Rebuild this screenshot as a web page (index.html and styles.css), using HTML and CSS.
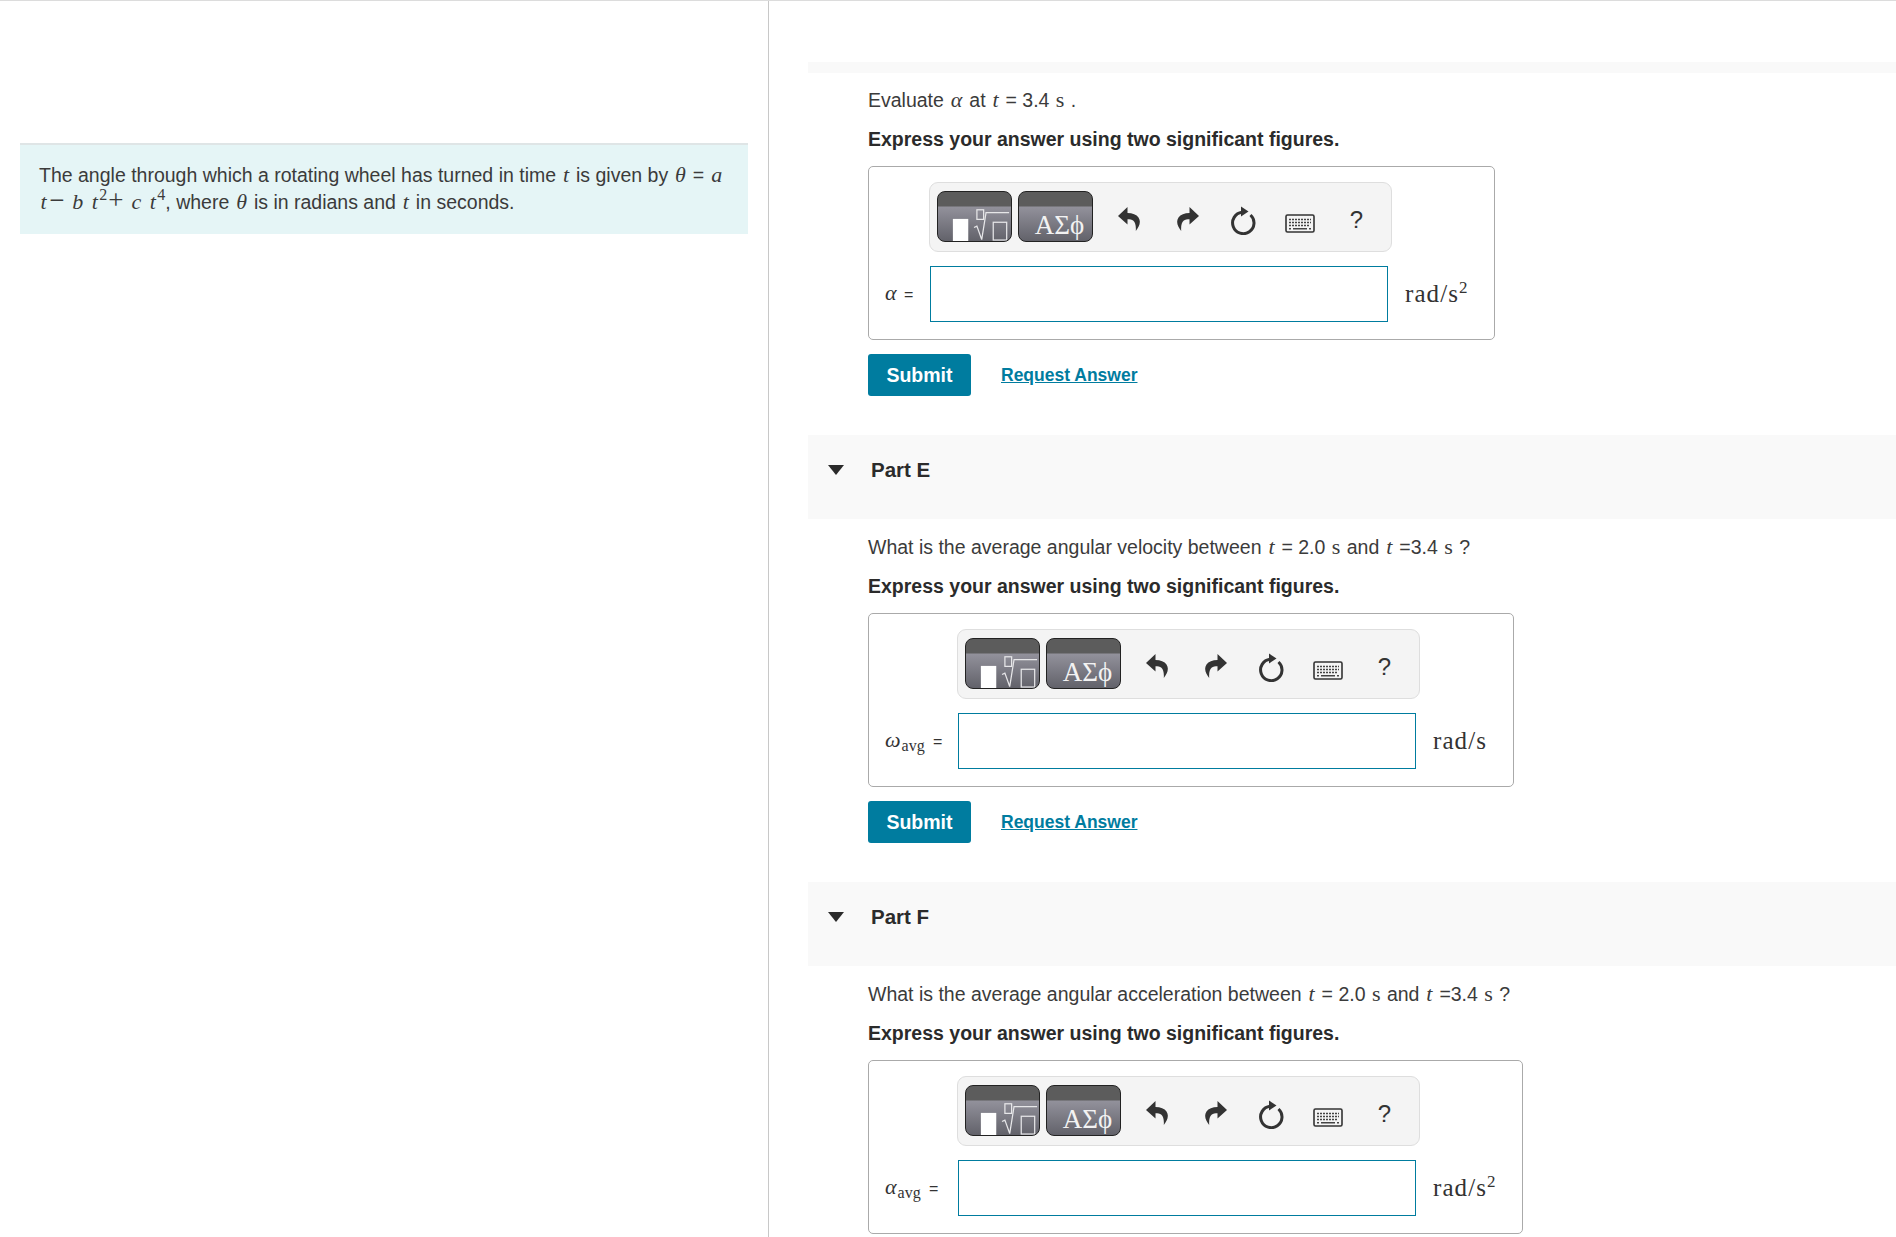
FILE: index.html
```html
<!DOCTYPE html>
<html lang="en">
<head>
<meta charset="utf-8">
<title>Rotating wheel</title>
<link rel="stylesheet" href="styles.css">
</head>
<body>
<svg class="defs" width="0" height="0" aria-hidden="true">
  <symbol id="i-tmpl" viewBox="0 0 75 51">
    <rect x="15" y="28" width="16" height="23" fill="#fff"/>
    <g fill="none" stroke="#e6e6e8" stroke-width="1.3">
      <rect x="40" y="18.5" width="7" height="10"/>
      <path d="M37 37l3-1.500 5 14 4.500-28h24"/>
      <rect x="57" y="31.500" width="14" height="18.500"/>
    </g>
  </symbol>
  <symbol id="i-undo" viewBox="0 0 22 24">
    <path d="M9.500 0L0 9l9.500 8.500v-5.300c5 0 9 1.300 8.300 11.800C21 20 23.500 15 20.500 10.500 18.500 7.500 14.500 6 9.500 6z" fill="#333"/>
  </symbol>
  <symbol id="i-redo" viewBox="0 0 22 24">
    <path d="M12.500 0L22 9l-9.500 8.500v-5.300c-5 0-9 1.300-8.300 11.800C1 20-1.500 15 1.500 10.500 3.500 7.500 7.500 6 12.500 6z" fill="#333"/>
  </symbol>
  <symbol id="i-reset" viewBox="0 0 26 29">
    <path d="M12 6.300A10.700 10.700 0 1 0 20.500 9" fill="none" stroke="#333" stroke-width="3"/>
    <path d="M11 0.500v10l7.500-5z" fill="#333"/>
  </symbol>
  <symbol id="i-kbd" viewBox="0 0 30 19">
    <rect x="1" y="1" width="28" height="17" rx="1.500" fill="#f4f4f4" stroke="#333" stroke-width="1.600"/>
    <path d="M4 5.500h22M4 8.500h22M4 11.500h20" stroke="#444" stroke-width="1.600" stroke-dasharray="2 1" fill="none"/>
    <path d="M8 14.800h14M4 14.800h2M24 14.800h2" stroke="#444" stroke-width="1.600" fill="none"/>
  </symbol>
</svg>

<div class="page">
  <aside class="left">
    <div class="problem">
      The angle through which a rotating wheel has turned in time <i class="m">t</i> is given by <i class="m">θ</i> = <i class="m">a</i><br>
      <i class="m">t</i><span class="op">−</span> <i class="m">b</i> <i class="m">t</i><sup class="m">2</sup><span class="op">+</span> <i class="m">c</i> <i class="m">t</i><sup class="m">4</sup>, where <i class="m">θ</i> is in radians and <i class="m">t</i> in seconds.
    </div>
  </aside>

  <main class="right">
    <section class="part">
      <div class="part-stub"></div>
      <div class="part-body">
        <p class="q">Evaluate <i class="m">α</i> at <i class="m">t</i> = 3.4 <span class="r">s</span> .</p>
        <p class="x">Express your answer using two significant figures.</p>
        <div class="answer narrow">
          <div class="toolbar">
            <button class="tb-btn" type="button"><svg class="tmpl"><use href="#i-tmpl"/></svg></button>
            <button class="tb-btn sym" type="button">ΑΣϕ</button>
            <span class="slot"><svg class="ic-arrow"><use href="#i-undo"/></svg></span>
            <span class="slot"><svg class="ic-arrow"><use href="#i-redo"/></svg></span>
            <span class="slot"><svg class="ic-reset"><use href="#i-reset"/></svg></span>
            <span class="slot"><svg class="ic-kbd"><use href="#i-kbd"/></svg></span>
            <span class="slot help">?</span>
          </div>
          <div class="row">
            <label class="lbl"><i class="m big">α</i> =</label>
            <div class="field"></div>
            <span class="unit">rad/s<sup>2</sup></span>
          </div>
        </div>
        <div class="actions"><button class="submit" type="button">Submit</button><a class="req" href="#">Request Answer</a></div>
      </div>
    </section>

    <section class="part">
      <div class="part-head"><span class="tri"></span><h2>Part E</h2></div>
      <div class="part-body">
        <p class="q">What is the average angular velocity between <i class="m">t</i> = 2.0 <span class="r">s</span> and <i class="m">t</i> =3.4 <span class="r">s</span> ?</p>
        <p class="x">Express your answer using two significant figures.</p>
        <div class="answer wide">
          <div class="toolbar">
            <button class="tb-btn" type="button"><svg class="tmpl"><use href="#i-tmpl"/></svg></button>
            <button class="tb-btn sym" type="button">ΑΣϕ</button>
            <span class="slot"><svg class="ic-arrow"><use href="#i-undo"/></svg></span>
            <span class="slot"><svg class="ic-arrow"><use href="#i-redo"/></svg></span>
            <span class="slot"><svg class="ic-reset"><use href="#i-reset"/></svg></span>
            <span class="slot"><svg class="ic-kbd"><use href="#i-kbd"/></svg></span>
            <span class="slot help">?</span>
          </div>
          <div class="row">
            <label class="lbl"><i class="m big">ω</i><sub class="r">avg</sub> =</label>
            <div class="field"></div>
            <span class="unit">rad/s</span>
          </div>
        </div>
        <div class="actions"><button class="submit" type="button">Submit</button><a class="req" href="#">Request Answer</a></div>
      </div>
    </section>

    <section class="part">
      <div class="part-head"><span class="tri"></span><h2>Part F</h2></div>
      <div class="part-body">
        <p class="q">What is the average angular acceleration between <i class="m">t</i> = 2.0 <span class="r">s</span> and <i class="m">t</i> =3.4 <span class="r">s</span> ?</p>
        <p class="x">Express your answer using two significant figures.</p>
        <div class="answer wide">
          <div class="toolbar">
            <button class="tb-btn" type="button"><svg class="tmpl"><use href="#i-tmpl"/></svg></button>
            <button class="tb-btn sym" type="button">ΑΣϕ</button>
            <span class="slot"><svg class="ic-arrow"><use href="#i-undo"/></svg></span>
            <span class="slot"><svg class="ic-arrow"><use href="#i-redo"/></svg></span>
            <span class="slot"><svg class="ic-reset"><use href="#i-reset"/></svg></span>
            <span class="slot"><svg class="ic-kbd"><use href="#i-kbd"/></svg></span>
            <span class="slot help">?</span>
          </div>
          <div class="row">
            <label class="lbl"><i class="m big">α</i><sub class="r">avg</sub> =</label>
            <div class="field"></div>
            <span class="unit">rad/s<sup>2</sup></span>
          </div>
        </div>
        <div class="actions"><button class="submit" type="button">Submit</button><a class="req" href="#">Request Answer</a></div>
      </div>
    </section>
  </main>
</div>
</body>
</html>
```
FILE: styles.css
```css
html, body { margin: 0; padding: 0; height: 1237px; overflow: hidden; background: #fff; }
body { font-family: "Liberation Sans", Arial, sans-serif; font-size: 19.5px; line-height: 27px; color: #3b3b3b; }
.defs { position: absolute; }

.page { display: grid; grid-template-columns: 769px 1fr; height: 1236px; border-top: 1px solid #dcdcdc; overflow: hidden; }
.left { border-right: 1px solid #c8c8c8; padding: 142px 20px 0; }
.problem { background: #e5f5f6; border-top: 2px solid #dfe5e6; padding: 17px 19px 18px; width: 690px; height: 54px; white-space: nowrap; }
.m { font-family: "Liberation Serif", "DejaVu Serif", serif; font-style: italic; font-size: 22px; line-height: 0; margin: 0 1.500px; }
.r { font-family: "Liberation Serif", serif; font-size: 22px; line-height: 0; margin: 0 1px; }
.op { font-family: "Liberation Serif", serif; font-size: 27px; line-height: 0; margin: 0 1px; }
sup.m { font-style: normal; font-size: 16px; line-height: 0; margin: 0; vertical-align: 9px; }

.right { padding: 61px 0 0 39px; min-width: 0; }
.part-stub { height: 11px; background: #f9f9f9; }
.part-head { height: 84px; background: #f9f9f9; display: flex; align-items: flex-start; padding-top: 21px; box-sizing: border-box; }
.part-head h2 { margin: 0 0 0 27px; font-size: 20.500px; line-height: 27px; font-weight: 700; color: #2b2b2b; }
.tri { width: 0; height: 0; margin: 9px 0 0 20px; border-style: solid; border-width: 10px 8px 0; border-color: #2b2b2b transparent transparent; }
.part-body { padding: 0 0 39px 60px; }
.q { margin: 0; padding-top: 14px; color: #3b3b3b; }
.part-head + .part-body .q { padding-top: 15px; }
.x { margin: 12px 0 13px; font-weight: 700; color: #2b2b2b; }

.answer { --label: 45px; width: fit-content; box-sizing: border-box; border: 1px solid #aaa; border-radius: 5px; padding: 15px 26px 17px 16px; }
.answer.wide { --label: 73px; }
.toolbar { margin-left: calc(var(--label) - 1px); width: 463px; height: 70px; box-sizing: border-box; border: 1px solid #dedede; border-radius: 9px; background: #f4f4f4; display: flex; align-items: flex-start; padding: 8px 0 0 7px; }
.tb-btn { width: 75px; height: 51px; padding: 0; margin: 0 6px 0 0; box-sizing: border-box; border: 1px solid #222; border-radius: 8px; overflow: hidden; background: linear-gradient(#5c5c5c 0, #5c5c5c 14px, #92919b 15px, #62626a 100%); color: #f2f2f2; display: block; flex: none; }
.tmpl { display: block; width: 73px; height: 49px; }
.sym { font-family: "Liberation Serif", serif; font-size: 27px; line-height: 27px; padding: 18px 0 0 8px; text-align: center; }
.slot { flex: none; width: 57px; height: 51px; display: flex; align-items: center; justify-content: center; }
.tb-btn + .slot { margin-left: 1px; }
.slot:nth-child(4) .ic-arrow { margin-left: 4px; }
.ic-arrow { width: 22px; height: 24px; margin-top: 5px; }
.ic-reset { width: 26px; height: 29px; margin-top: 7px; }
.ic-kbd { width: 30px; height: 19px; margin-top: 14px; }
.help { font-size: 24px; color: #333; padding-top: 5px; box-sizing: border-box; }

.row { display: flex; align-items: center; margin-top: 14px; height: 56px; }
.lbl { width: var(--label); flex: none; font-size: 16px; color: #333; white-space: nowrap; }
.big { font-size: 22px; line-height: 0; margin: 0 3px 0 0; }
.lbl sub { font-size: 16px; line-height: 0; margin: 0 4px 0 -2px; }
.field { width: 458px; height: 56px; box-sizing: border-box; border: 1px solid #007c9f; background: #fff; flex: none; }
.unit { margin-left: 17px; padding-bottom: 2px; font-family: "Liberation Serif", serif; font-size: 25px; letter-spacing: 1.100px; color: #333; white-space: nowrap; }
.unit sup { font-size: 17px; line-height: 0; letter-spacing: 0; vertical-align: 9px; }

.actions { display: flex; align-items: center; margin-top: 14px; }
.submit { width: 103px; height: 42px; border: 0; border-radius: 3px; background: #007c9f; color: #fff; font: 700 19.5px/42px "Liberation Sans", Arial, sans-serif; padding: 0; }
.req { margin-left: 30px; color: #007c9f; font-size: 17.5px; font-weight: 700; text-decoration: underline; }
```
